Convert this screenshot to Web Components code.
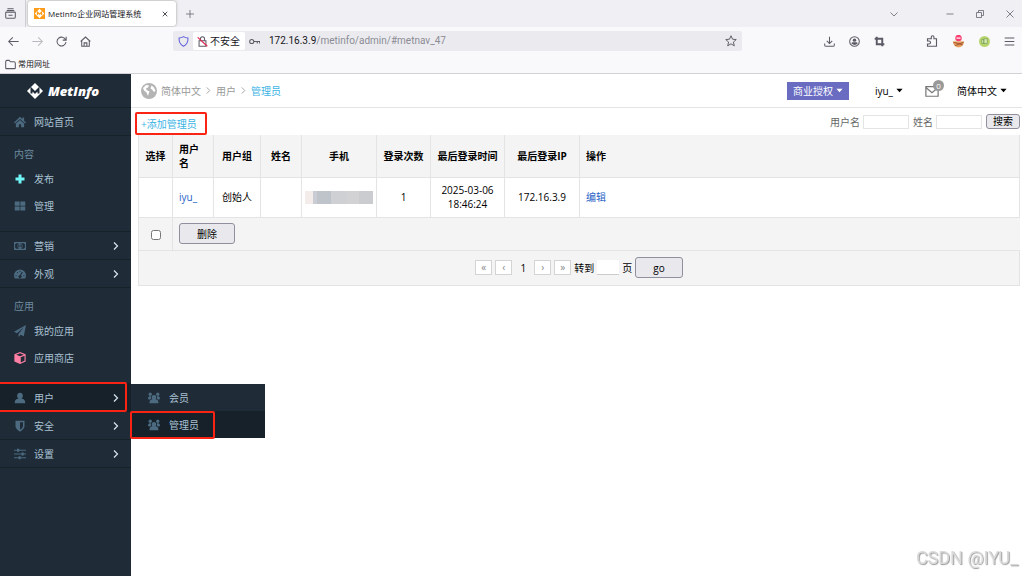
<!DOCTYPE html>
<html lang="zh-CN">
<head>
<meta charset="utf-8">
<title>MetInfo企业网站管理系统</title>
<style>
    :root {
        --side: #1f2b36;
        --side-dark: #17212a;
        --side-text: #a9c1d3;
        --side-icon: #4c6a80;
        --line: #e4e4e4;
        --blue: #3bb4e5;
        --red: #fb2313;
    }

    body {
        margin: 0;
        min-height: 100vh;
        display: flex;
        flex-direction: column;
        background: #fff;
        color: #000;
        font: 10px/14px "Open Sans", "Noto Sans CJK SC", sans-serif;
    }
</style>
</head>
<body>
<browser-tabs>MetInfo企业网站管理系统</browser-tabs>
<browser-nav host="172.16.3.9" path="/metinfo/admin/#metnav_47"></browser-nav>
<admin-layout>
    <side-menu slot="side">
        <menu-item icon="home" line>网站首页</menu-item>
        <menu-group label="内容">
            <menu-item icon="plus" color="#6ff5f5">发布</menu-item>
            <menu-item icon="grid">管理</menu-item>
        </menu-group>
        <menu-item icon="money" line more>营销</menu-item>
        <menu-item icon="gauge" line more>外观</menu-item>
        <menu-group label="应用">
            <menu-item icon="plane">我的应用</menu-item>
            <menu-item icon="cube" color="#ff7fa5">应用商店</menu-item>
        </menu-group>
        <menu-item icon="user" line more active marked>用户
            <sub-menu slot="sub">
                <menu-item icon="users" inner>会员</menu-item>
                <menu-item icon="users" inner active marked>管理员</menu-item>
            </sub-menu>
        </menu-item>
        <menu-item icon="shield" line more>安全</menu-item>
        <menu-item icon="sliders" line more>设置</menu-item>
    </side-menu>
    <top-bar></top-bar>
    <search-bar></search-bar>
    <admin-table></admin-table>
</admin-layout>
<water-mark>CSDN @IYU_</water-mark>

<script>
'use strict'

// Dibujos de los iconos, todos en una caja de 16x16
const ICONS = {
    home: '<path fill="currentColor" d="M8 1 0 8.500 1.200 10 8 4l6.800 6L16 8.500l-2.500-2.300V2h-2.200v2zM2.500 10 8 5.200l5.500 4.800v5h-4v-4h-3v4h-4z"/>',
    plus: '<path fill="currentColor" d="M6 2h4v4h4v4h-4v4H6v-4H2V6h4z"/>',
    grid: '<path fill="currentColor" d="M1 2h6.500v5.500H1zM8.500 2H15v5.500H8.500zM1 8.500h6.500V14H1zM8.500 8.500H15V14H8.500z"/>',
    money: '<path fill="none" stroke="currentColor" stroke-width="1.500" d="M.8 3.500h14.400v9H.8zM8 5.500v5M6.800 6.500 8 5.500M6.500 10.500h3"/><ellipse cx="8" cy="8" rx="3" ry="3.500" fill="none" stroke="currentColor"/><path fill="currentColor" d="M1 4h2L1 6zM15 4h-2l2 2zM1 12h2l-2-2zM15 12h-2l2-2z"/>',
    gauge: '<path fill="currentColor" fill-rule="evenodd" d="M0 10a8 8 0 0 1 16 0c0 1.600-.4 3-1.200 4H1.200A7 7 0 0 1 0 10zm2-.5v1.500h1.500V9.500zm2-4V7h1.500V5.500zm3.200-2V5h1.500V3.500zm5.300 6v1.500H14V9.500zM10.500 5l-2.700 4.500a2 2 0 1 0 1.500.5L11.800 5.500z"/>',
    plane: '<path fill="currentColor" d="M16 0 0 9l4 2 9-8-7 9v4l3-3 4 2z"/>',
    cube: '<path fill="currentColor" fill-rule="evenodd" d="M8 0l7.500 3v9.500L8 16 .5 12.500V3zm0 1.500L3 3.500l5 2 5-2zM9 7v7l5-2.500V5z"/>',
    user: '<path fill="currentColor" d="M8 1c5 0 4.500 7 2 7.500 3 .5 5 1.500 5 6.500H1c0-5 2-6 5-6.500C3.500 8 3 1 8 1z"/>',
    users: '<path fill="currentColor" d="M8 4c4 0 3.500 5 2 5.500 2 0 4 1 4 5.500H2c0-4.500 2-5.500 4-5.500C4.500 9 4 4 8 4z"/><circle cx="3" cy="3" r="2.200" fill="currentColor"/><circle cx="13" cy="3" r="2.200" fill="currentColor"/><path fill="currentColor" d="M0 9c0-3 1-3.500 4-3.500V9L3 10H1zM16 9c0-3-1-3.500-4-3.500V9l1 1h2z"/>',
    shield: '<path fill="currentColor" fill-rule="evenodd" d="M2 1h12v7c0 4-4 6-6 7.500C6 14 2 12 2 8zm6 2v10c2-1 4-3 4-5V3z"/>',
    sliders: '<path fill="none" stroke="currentColor" stroke-width="1.500" d="M0 3h16M0 8h16M0 13h16"/><path fill="currentColor" d="M4 1h3v4H4zM10 6h3v4h-3zM6 11h3v4H6z"/>',
    chevron: '<path fill="none" stroke="currentColor" stroke-width="2.500" d="m4 1 7 7-7 7"/>',
    angle: '<path fill="none" stroke="currentColor" stroke-width="2" d="m4 1 7 7-7 7"/>',
    caret: '<path fill="currentColor" d="M1 4h14l-7 8z"/>',
    down: '<path fill="none" stroke="currentColor" stroke-width="1.500" d="m1 5 7 7 7-7"/>',
    history: '<path fill="none" stroke="currentColor" stroke-width="1.500" d="M3.500 1h9M2.500 3.500h11M2 6h12q1 0 1 1v6q0 2-2 2H3q-2 0-2-2V7q0-1 1-1zM5 10.500h6"/>',
    close: '<path fill="none" stroke="currentColor" stroke-width="2" d="m2 2 12 12M14 2 2 14"/>',
    thin: '<path fill="none" stroke="currentColor" stroke-width="1.500" d="m1 1 14 14M15 1 1 15"/>',
    add: '<path fill="none" stroke="currentColor" stroke-width="1.500" d="M8 0v16M0 8h16"/>',
    min: '<path fill="none" stroke="currentColor" stroke-width="1.500" d="M1 8h14"/>',
    restore: '<path fill="none" stroke="currentColor" stroke-width="1.500" d="M1 5h10v10H1zM5 5V1h10v10h-4"/>',
    back: '<path fill="none" stroke="currentColor" stroke-width="1.500" d="M15.500 8H1.500M7 2 1 8l6 6"/>',
    forward: '<path fill="none" stroke="currentColor" stroke-width="1.500" d="M.5 8h14M9 2l6 6-6 6"/>',
    reload: '<path fill="none" stroke="currentColor" stroke-width="1.500" d="M14 5.500A6.500 6.500 0 1 0 14.500 9M14.800 1v5h-5"/>',
    house: '<path fill="none" stroke="currentColor" stroke-width="1.500" d="M1 8 8 1.500 15 8M2.500 7v8h11V7M6 15v-5h4v5"/>',
    guard: '<path fill="none" stroke="#5f5fdc" stroke-width="1.500" d="M8 1c2 1.500 4.500 2 6.500 2 .2 6-2 10-6.500 12C3.500 13 1.300 9 1.500 3 3.500 3 6 2.500 8 1z"/>',
    lock: '<path fill="none" stroke="#5b5b66" stroke-width="1.500" d="M3 7h10v8H3zM5 7V4q0-3 3-3t3 3v3"/><path stroke="#e22850" stroke-width="1.800" d="m1 2 14 13"/>',
    key: '<path fill="none" stroke="currentColor" stroke-width="1.500" d="M7 8h8.500v3M12 8v3"/><circle cx="4" cy="8" r="3" fill="none" stroke="currentColor" stroke-width="1.500"/>',
    star: '<path fill="none" stroke="currentColor" stroke-width="1.300" d="m8 1 2 4.600 5 .5-3.800 3.300 1.200 5L8 11.800l-4.400 2.600 1.200-5L1 6.100l5-.5z"/>',
    download: '<path fill="none" stroke="currentColor" stroke-width="1.500" d="M8 1v10M4 7l4 4 4-4M1 11v2q0 2 2 2h10q2 0 2-2v-2"/>',
    account: '<circle cx="8" cy="8" r="7" fill="none" stroke="currentColor" stroke-width="1.500"/><circle cx="8" cy="6" r="2.500" fill="currentColor"/><path fill="currentColor" d="M3.500 11q0-2 2-2h5q2 0 2 2-4 4-9 0z"/>',
    crop: '<path fill="none" stroke="currentColor" stroke-width="2.800" d="M4 1v11h11M1 4h11v11"/>',
    puzzle: '<path fill="none" stroke="currentColor" stroke-width="1.500" d="M2 5h5V3q0-2 1.800-2t1.800 2v2H14v10H2v-3h2q2 0 2-2T4 8H2z"/>',
    cart: '<circle cx="8" cy="10" r="6" fill="#f4ead8"/><path fill="#e09a5a" d="M1 8h14q-1 7-7 7T1 8z"/><path stroke="#9b4a2b" d="m2 9 11 3M14 9 4 13"/><circle cx="8" cy="3.800" r="4" fill="#fb3f72"/><path stroke="#fff" stroke-width="1.500" d="M5.500 3.800h5"/>',
    green: '<circle cx="8" cy="8" r="8" fill="#b9d66e"/><path fill="#dcebb4" stroke="#6f9b55" d="M4 5h3v6H4zM7 4h5v7H7z"/>',
    burger: '<path fill="none" stroke="currentColor" stroke-width="1.500" d="M1 3h14M1 8h14M1 13h14"/>',
    folder: '<path fill="none" stroke="#5b5b66" stroke-width="1.500" d="M1 13V4q0-2 2-2h3l2 2h5q2 0 2 2v7q0 1-1 1H2q-1 0-1-1z"/>',
    favicon: '<path fill="#ff9c1a" d="M0 0h16v16H0z"/><path fill="#fff" d="m8 1 7 7-7 7-7-7z"/><path fill="none" stroke="#ff9c1a" stroke-width="1.800" d="M5 10V6l3 3 3-3v4"/>',
    logo: '<path fill="#fff" d="m8 0 8 8-8 8-8-8z"/><path fill="none" stroke="#1f2b36" stroke-width="2" d="M4.500 10.500V6L8 9.500 11.500 6v4.500"/>',
    globe: '<circle cx="8" cy="8" r="8" fill="#b4b4b4"/><path fill="#fff" d="m2 5 3-3 3 .5-1 2-2 1 .5 1.500 3 1.500-1 2.500L7 13l-1.500-3.500-2.500-2zM10.500 2.500l2.500 2 1.500 3.500-1.500 1-2-2.500-1.500-1z"/>',
    mail: '<path fill="none" stroke="currentColor" stroke-width="1.400" d="M1 3h14v11H1zM1 4l7 6 7-6"/>'
};

// Clase base: adjunta el Shadow DOM y dibuja el contenido de render()
class BaseComponent extends HTMLElement {
    constructor() {
        super();
        this.attachShadow({ mode: 'open' });
    }

    connectedCallback() {
        this.shadowRoot.innerHTML = this.render();
    }
}

class AppIcon extends BaseComponent {
    render() {
        const size = this.getAttribute('size') || 12;
        return `
        <style>
            :host { display: block; flex: none; width: ${size}px; height: ${size}px; }
            svg { display: block; width: 100%; height: 100%; }
        </style>
        <svg viewBox="0 0 16 16" aria-hidden="true">${ICONS[this.getAttribute('name')]}</svg>`;
    }
}

// Recuadro rojo que resalta lo que tiene debajo
class RedMark extends BaseComponent {
    render() {
        return `
        <style>
            :host {
                position: absolute;
                inset: -2px 4px 0 -2px;
                border: 2px solid var(--red);
                border-radius: 2px;
                pointer-events: none;
                z-index: 2;
            }
        </style>`;
    }
}

class BrowserTabs extends BaseComponent {
    render() {
        return `
        <style>
            :host { display: flex; align-items: center; height: 27px; background: #f0f0f4; color: #5b5b66; }
            button { border: 0; padding: 0; background: none; color: inherit; }
            .history { padding: 0 9px 0 5px; }
            .tab {
                box-sizing: border-box;
                width: 148px;
                height: 25px;
                margin: 0 10px 0 2px;
                padding: 0 8px 0 6px;
                display: flex;
                align-items: center;
                gap: 3px;
                background: #fff;
                color: #15141a;
                border-radius: 3px;
                box-shadow: 0 0 3px #999;
                font-size: 8px;
                white-space: nowrap;
            }
            .divider { width: 1px; height: 27px; background: #cfcfd8; }
            .tab button { margin-left: auto; }
            .list { margin-left: auto; margin-right: 48px; }
            .window { display: flex; gap: 22px; padding-right: 8px; }
        </style>
        <button class="history" aria-label="历史"><app-icon name="history" size="11"></app-icon></button>
        <span class="divider"></span>
        <div class="tab">
            <app-icon name="favicon" size="11"></app-icon>
            <slot></slot>
            <button aria-label="关闭标签"><app-icon name="close" size="6"></app-icon></button>
        </div>
        <button aria-label="新标签"><app-icon name="add" size="8"></app-icon></button>
        <button class="list" aria-label="标签列表"><app-icon name="down" size="8"></app-icon></button>
        <div class="window">
            <button aria-label="最小化"><app-icon name="min" size="8"></app-icon></button>
            <button aria-label="还原"><app-icon name="restore" size="8"></app-icon></button>
            <button aria-label="关闭"><app-icon name="thin" size="8"></app-icon></button>
        </div>`;
    }
}

class BrowserNav extends BaseComponent {
    render() {
        return `
        <style>
            :host { display: block; background: #f9f9fb; border-bottom: 1px solid #d2d2d6; color: #5b5b66; }
            button { border: 0; padding: 0; background: none; color: inherit; }
            .row { display: flex; align-items: center; height: 28px; }
            .left { display: flex; gap: 13px; width: 165px; padding-left: 8px; }
            .left button:nth-child(2) { opacity: .4; }
            .url {
                flex: 1;
                display: flex;
                align-items: center;
                gap: 4px;
                height: 20px;
                padding: 0 5px;
                background: #ebebef;
                border-radius: 2px;
            }
            .unsafe {
                display: flex;
                align-items: center;
                gap: 2px;
                height: 18px;
                padding: 0 5px 0 4px;
                background: #fff;
                color: #15141a;
                border-radius: 2px;
            }
            .text { margin-left: 5px; color: #8c8c95; font-family: Roboto, sans-serif; }
            .text b { font-weight: normal; color: #15141a; }
            .star { margin-left: auto; }
            .right { display: flex; gap: 14px; padding: 0 7px 0 82px; }
            .right button:nth-child(4) { margin-left: 27px; }
            .marks { display: flex; align-items: center; gap: 2px; height: 18px; padding-left: 5px; color: #15141a; font-size: 8px; }
        </style>
        <div class="row">
            <div class="left">
                <button aria-label="后退"><app-icon name="back" size="11"></app-icon></button>
                <button aria-label="前进"><app-icon name="forward" size="11"></app-icon></button>
                <button aria-label="刷新"><app-icon name="reload" size="11"></app-icon></button>
                <button aria-label="主页"><app-icon name="house" size="11"></app-icon></button>
            </div>
            <div class="url">
                <app-icon name="guard" size="11"></app-icon>
                <span class="unsafe"><app-icon name="lock" size="11"></app-icon>不安全</span>
                <app-icon name="key" size="11"></app-icon>
                <span class="text"><b>${this.getAttribute('host')}</b>${this.getAttribute('path')}</span>
                <button class="star" aria-label="收藏"><app-icon name="star" size="12"></app-icon></button>
            </div>
            <div class="right">
                <button aria-label="下载"><app-icon name="download" size="11"></app-icon></button>
                <button aria-label="账户"><app-icon name="account" size="11"></app-icon></button>
                <button aria-label="截图"><app-icon name="crop" size="11"></app-icon></button>
                <button aria-label="扩展"><app-icon name="puzzle" size="12"></app-icon></button>
                <button aria-label="购物"><app-icon name="cart" size="13"></app-icon></button>
                <button aria-label="笔记"><app-icon name="green" size="11"></app-icon></button>
                <button aria-label="菜单"><app-icon name="burger" size="11"></app-icon></button>
            </div>
        </div>
        <div class="marks"><app-icon name="folder" size="11"></app-icon>常用网址</div>`;
    }
}

class AdminLayout extends BaseComponent {
    render() {
        return `
        <style>
            :host { flex: 1; display: grid; grid-template-columns: 131px minmax(0, 1fr); }
        </style>
        <slot name="side"></slot>
        <main><slot></slot></main>`;
    }
}

class SideMenu extends BaseComponent {
    render() {
        return `
        <style>
            :host { display: block; background: var(--side); }
            .logo {
                box-sizing: border-box;
                height: 34px;
                padding-left: 27px;
                display: flex;
                align-items: center;
                gap: 5px;
                border-bottom: 1px solid var(--side-dark);
                color: #fff;
                font-size: 13px;
                font-weight: 800;
                font-style: italic;
            }
        </style>
        <div class="logo"><app-icon name="logo" size="16"></app-icon>MetInfo</div>
        <nav><slot></slot></nav>`;
    }
}

class MenuGroup extends BaseComponent {
    render() {
        return `
        <style>
            :host { display: block; padding: 7px 0 12px; border-bottom: 1px solid var(--side-dark); }
            .label { padding-left: 14px; line-height: 22px; color: #6e8ba0; }
        </style>
        <div class="label">${this.getAttribute('label')}</div>
        <slot></slot>`;
    }
}

class MenuItem extends BaseComponent {
    render() {
        const line = this.hasAttribute('line');
        const inner = this.hasAttribute('inner');
        return `
        <style>
            :host { display: block; position: relative; }
            a {
                box-sizing: border-box;
                height: ${line ? 28 : 27}px;
                padding: 0 11px 0 ${inner ? 17 : 14}px;
                display: flex;
                align-items: center;
                gap: ${inner ? 9 : 8}px;
                border-bottom: ${line ? '1px solid var(--side-dark)' : '0'};
                background: ${this.hasAttribute('active') ? 'var(--side-dark)' : 'transparent'};
                color: var(--side-text);
                text-decoration: none;
            }
            a > app-icon:first-child { color: ${this.getAttribute('color') || 'var(--side-icon)'}; }
            .more { margin-left: auto; color: #d5e3ee; }
            red-mark { ${inner ? 'inset: 0 50px -1px -1px;' : ''} }
        </style>
        <a href="#">
            <app-icon name="${this.getAttribute('icon')}" size="12"></app-icon>
            <span><slot></slot></span>
            ${this.hasAttribute('more') ? '<app-icon class="more" name="chevron" size="8"></app-icon>' : ''}
        </a>
        <slot name="sub"></slot>
        ${this.hasAttribute('marked') ? '<red-mark></red-mark>' : ''}`;
    }
}

// Submenú que se despliega a la derecha de su elemento
class SubMenu extends BaseComponent {
    render() {
        return `
        <style>
            :host { position: absolute; left: 100%; top: 0; width: 134px; background: var(--side); z-index: 1; }
        </style>
        <slot></slot>`;
    }
}

class TopBar extends BaseComponent {
    render() {
        return `
        <style>
            :host {
                box-sizing: border-box;
                height: 34px;
                padding: 0 15px 0 10px;
                display: flex;
                align-items: center;
                border-bottom: 1px solid var(--line);
            }
            nav, .tools, button { display: flex; align-items: center; }
            nav { gap: 4px; color: #999; }
            nav a { color: inherit; text-decoration: none; }
            nav a:last-child { color: var(--blue); }
            .tools { margin-left: auto; gap: 22px; }
            button { position: relative; gap: 3px; border: 0; padding: 0; background: none; font: inherit; color: #000; }
            .license { height: 18px; padding: 0 6px; margin-right: 4px; background: #6a6cc2; color: #fff; }
            .mail { margin-right: -4px; color: #777; }
            .badge {
                position: absolute;
                left: 8px;
                top: -4px;
                width: 11px;
                border-radius: 6px;
                background: #999;
                color: #fff;
                font-size: 8px;
                line-height: 11px;
                text-align: center;
            }
        </style>
        <nav>
            <app-icon name="globe" size="16"></app-icon>
            <a href="#">简体中文</a>
            <app-icon name="angle" size="7"></app-icon>
            <a href="#">用户</a>
            <app-icon name="angle" size="7"></app-icon>
            <a href="#">管理员</a>
        </nav>
        <div class="tools">
            <button class="license">商业授权<app-icon name="caret" size="7"></app-icon></button>
            <button>iyu_<app-icon name="caret" size="7"></app-icon></button>
            <button class="mail"><app-icon name="mail" size="14"></app-icon><span class="badge">0</span></button>
            <button>简体中文<app-icon name="caret" size="7"></app-icon></button>
        </div>`;
    }
}

class SearchBar extends BaseComponent {
    render() {
        return `
        <style>
            :host { display: flex; align-items: center; height: 27px; padding: 0 2px 0 10px; }
            .add { position: relative; color: var(--blue); text-decoration: none; line-height: 22px; padding-top: 4px; }
            red-mark { inset: 3px -10px 0 -6px; }
            form { margin-left: auto; display: flex; align-items: center; gap: 3px; color: #666; }
            input { box-sizing: border-box; width: 46px; height: 14px; border: 1px solid var(--line); margin-right: 1px; padding: 0 2px; font: inherit; }
            button {
                box-sizing: border-box;
                width: 34px;
                height: 15px;
                border: 1px solid #8f8f9d;
                border-radius: 3px;
                background: #e9e9ed;
                padding: 0;
                font: inherit;
                line-height: 13px;
                color: #000;
                align-self: flex-start;
            }
        </style>
        <a class="add" href="#">+添加管理员<red-mark></red-mark></a>
        <form>
            <label for="account">用户名</label>
            <input id="account">
            <label for="fullname">姓名</label>
            <input id="fullname">
            <button type="button">搜索</button>
        </form>`;
    }
}

class AdminTable extends BaseComponent {
    render() {
        return `
        <style>
            :host { display: block; padding: 0 2px 0 7px; }
            table { width: 100%; border-collapse: collapse; table-layout: fixed; background: #f4f4f4; }
            th, td { box-sizing: border-box; border: 1px solid var(--line); border-top: 0; padding: 0 6px; text-align: center; }
            th { font-weight: bold; padding: 0; }
            thead tr { height: 42px; }
            .data { height: 40px; background: #fff; }
            .batch { height: 33px; }
            .pages { height: 35px; }
            .left, th.left { text-align: left; padding: 0 6px; }
            .batch td { border-right: 0; }
            .batch td:first-child { border-right: 1px solid var(--line); }
            a { color: #2862c6; text-decoration: none; }
            input[type=checkbox] { width: 10px; height: 10px; margin: 0; vertical-align: middle; }
            .phone {
                height: 13px;
                margin: 0 -3px;
                background: linear-gradient(90deg, #f3ecea 0 12%, #c9ccd2 12% 18%, #bfc3ca 18% 38%, #cfd0d4 38% 62%, #d2d2d4 62% 80%, #cbcccf 80%);
            }
            .btn {
                box-sizing: border-box;
                height: 21px;
                padding: 0 17px;
                border: 1px solid #8f8f9d;
                border-radius: 3px;
                background: #e9e9ed;
                font: inherit;
                color: #000;
            }
            .pager { display: flex; align-items: center; justify-content: center; gap: 3px; }
            .pager a {
                box-sizing: border-box;
                width: 17px;
                height: 15px;
                border: 1px solid #d4d4d4;
                background: #fff;
                color: #888;
                line-height: 12px;
            }
            .pager b { width: 16px; font-weight: normal; }
            .pager input { box-sizing: border-box; width: 22px; height: 15px; border: 0; border-bottom: 1px solid #ccc; padding: 0; }
        </style>
        <table>
            <colgroup>
                <col style="width: 34px"><col style="width: 41px"><col style="width: 47px">
                <col style="width: 41px"><col style="width: 75px"><col style="width: 54px">
                <col style="width: 74px"><col style="width: 75px"><col>
            </colgroup>
            <thead>
                <tr>
                    <th>选择</th><th class="left">用户名</th><th>用户组</th><th>姓名</th><th>手机</th>
                    <th>登录次数</th><th>最后登录时间</th><th>最后登录IP</th><th class="left">操作</th>
                </tr>
            </thead>
            <tbody>
                <tr class="data">
                    <td></td>
                    <td class="left"><a href="#">iyu_</a></td>
                    <td>创始人</td>
                    <td></td>
                    <td><div class="phone"></div></td>
                    <td>1</td>
                    <td>2025-03-06 18:46:24</td>
                    <td>172.16.3.9</td>
                    <td class="left"><a href="#">编辑</a></td>
                </tr>
                <tr class="batch">
                    <td><input type="checkbox" aria-label="全选"></td>
                    <td class="left" colspan="8"><button class="btn">删除</button></td>
                </tr>
                <tr class="pages">
                    <td colspan="9">
                        <div class="pager">
                            <a href="#">«</a><a href="#">‹</a><b>1</b><a href="#">›</a><a href="#">»</a>
                            <label for="page">转到</label><input id="page"><span>页</span>
                            <button class="btn">go</button>
                        </div>
                    </td>
                </tr>
            </tbody>
        </table>`;
    }
}

// Marca de agua en la esquina inferior derecha
class WaterMark extends BaseComponent {
    render() {
        return `
        <style>
            :host {
                position: fixed;
                right: 4px;
                bottom: 6px;
                color: #dadada;
                font: 18px/24px Roboto, sans-serif;
                text-shadow: 1px 1px 1px #999;
            }
        </style>
        <slot></slot>`;
    }
}

// Registro de todos los componentes
customElements.define('app-icon', AppIcon);
customElements.define('red-mark', RedMark);
customElements.define('browser-tabs', BrowserTabs);
customElements.define('browser-nav', BrowserNav);
customElements.define('admin-layout', AdminLayout);
customElements.define('side-menu', SideMenu);
customElements.define('menu-group', MenuGroup);
customElements.define('menu-item', MenuItem);
customElements.define('sub-menu', SubMenu);
customElements.define('top-bar', TopBar);
customElements.define('search-bar', SearchBar);
customElements.define('admin-table', AdminTable);
customElements.define('water-mark', WaterMark);
</script>
</body>
</html>
